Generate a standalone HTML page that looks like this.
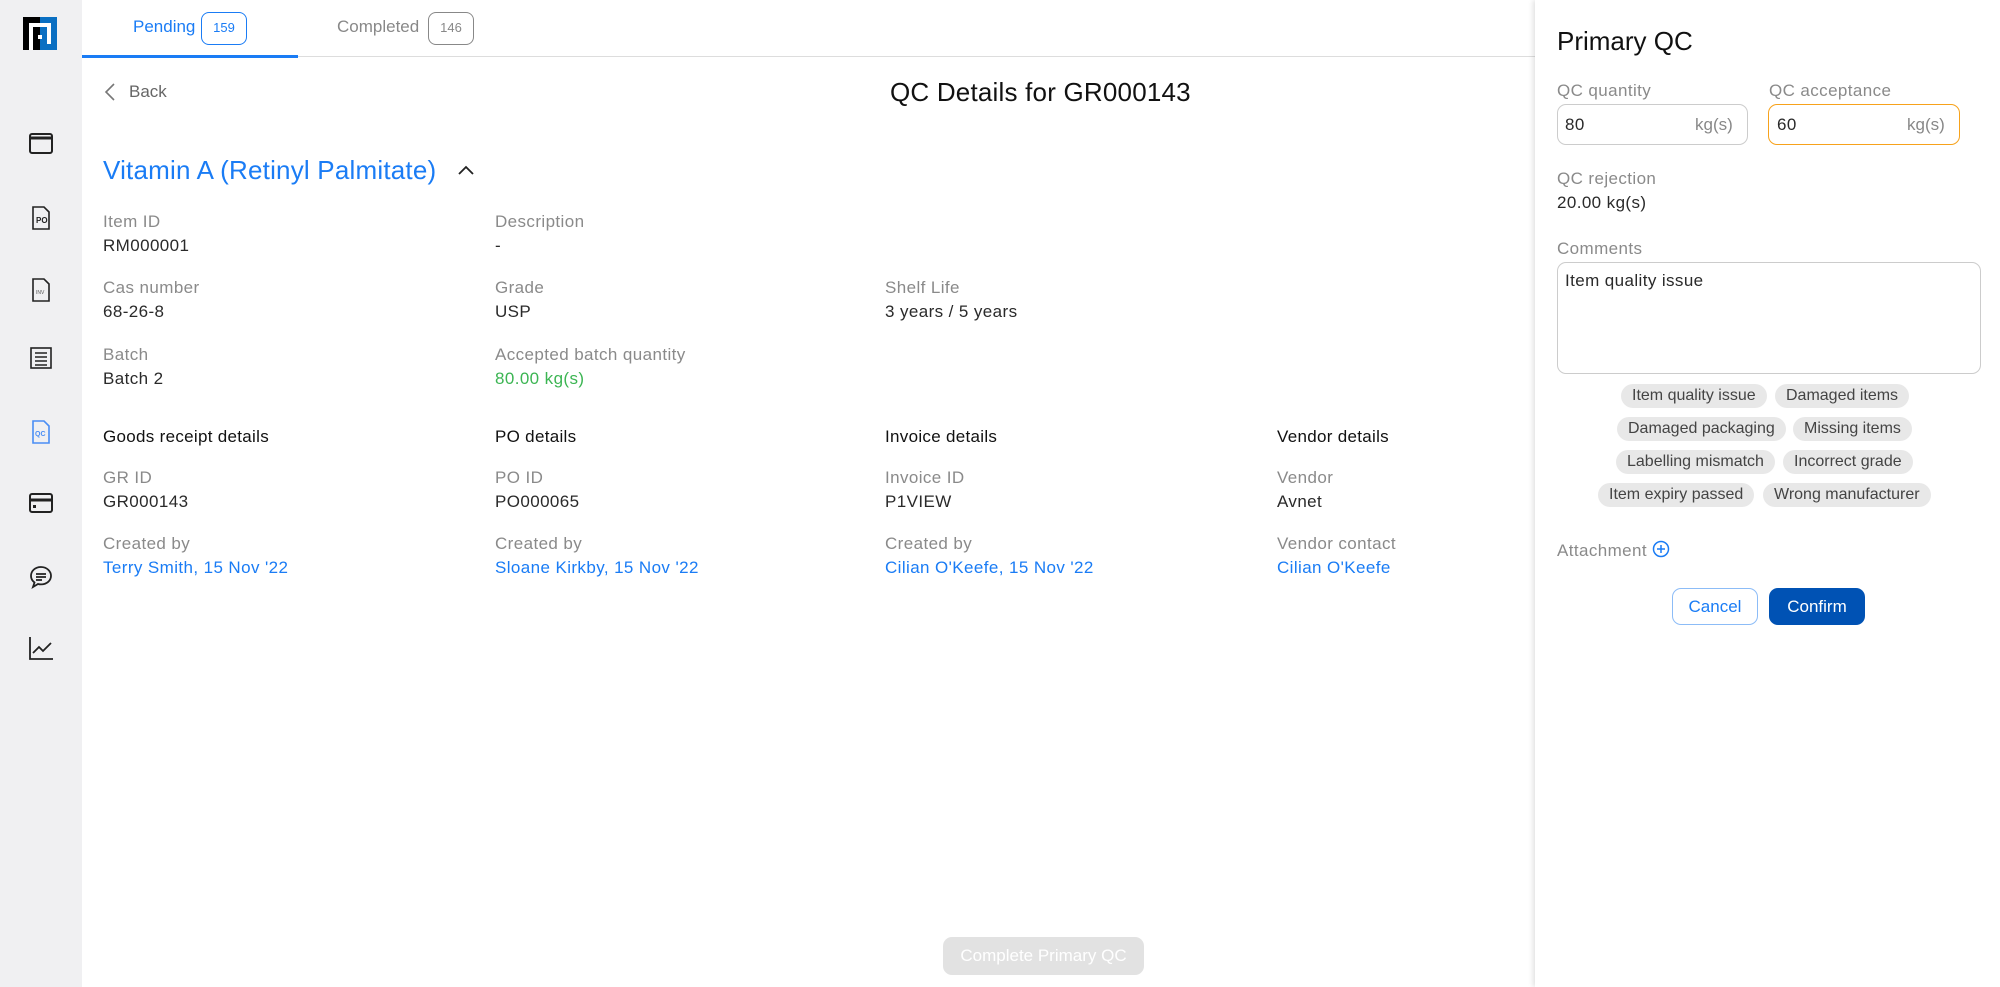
<!DOCTYPE html>
<html><head><meta charset="utf-8">
<style>
*{box-sizing:border-box;margin:0;padding:0}
body{width:2000px;height:987px;overflow:hidden;background:#fff;font-family:"Liberation Sans",sans-serif;position:relative;color:#222}
.abs{position:absolute;white-space:nowrap}
.side{position:absolute;left:0;top:0;width:82px;height:987px;background:#f0f0f2}
.lbl{color:#8a8a8a;font-size:17px;letter-spacing:0.4px}
.val{color:#2a2a2a;font-size:17px;letter-spacing:0.4px}
.blue{color:#1a7cf5}
.hdr{color:#111;font-size:17px;letter-spacing:0.3px}
.chip{position:absolute;height:24px;line-height:24px;background:#e8e8e8;border-radius:12px;font-size:16px;color:#444;padding:0 11px;white-space:nowrap}
.ic{position:absolute;left:28px}
</style></head><body>
<div class="side"></div>
<!-- logo -->
<div class="abs" style="left:23px;top:17px;width:34px;height:33px;background:#000"></div>
<div class="abs" style="left:40px;top:17px;width:17px;height:33px;background:#0a6fc2"></div>
<div class="abs" style="left:29px;top:23px;width:22px;height:4px;background:#fff"></div>
<div class="abs" style="left:29px;top:23px;width:4px;height:27px;background:#fff"></div>
<div class="abs" style="left:47px;top:23px;width:4px;height:21px;background:#fff"></div>
<div class="abs" style="left:38px;top:35px;width:4px;height:4px;background:#fff"></div>
<!-- sidebar icons -->
<svg class="ic" style="top:130px" width="26" height="26" viewBox="0 0 26 26" fill="none" stroke="#222" stroke-width="2"><rect x="2" y="4" width="22" height="19" rx="2"/><line x1="2" y1="8" x2="24" y2="8" stroke-width="3"/></svg>
<svg class="ic" style="top:205px" width="26" height="26" viewBox="0 0 26 26" fill="none" stroke="#222" stroke-width="1.6"><path d="M5 2h11l5 5v17H5z"/><text x="8" y="18" font-size="8" font-family="Liberation Sans" fill="#222" stroke="none" font-weight="bold">PO</text></svg>
<svg class="ic" style="top:277px" width="26" height="26" viewBox="0 0 26 26" fill="none" stroke="#222" stroke-width="1.6"><path d="M5 2h11l5 5v17H5z"/><text x="8" y="17" font-size="5" font-family="Liberation Sans" fill="#555" stroke="none">INV</text></svg>
<svg class="ic" style="top:345px" width="26" height="26" viewBox="0 0 26 26" fill="none" stroke="#222" stroke-width="1.6"><rect x="3" y="3" width="20" height="20"/><path d="M7 8h12M7 12h12M7 16h12M7 20h12"/></svg>
<svg class="ic" style="top:419px" width="26" height="26" viewBox="0 0 26 26" fill="none" stroke="#4a8ef5" stroke-width="1.6"><path d="M5 2h11l5 5v17H5z"/><text x="7" y="17" font-size="7" font-family="Liberation Sans" fill="#4a8ef5" stroke="none" font-weight="bold">QC</text></svg>
<svg class="ic" style="top:490px" width="26" height="26" viewBox="0 0 26 26" fill="none" stroke="#222" stroke-width="2"><rect x="2" y="4" width="22" height="18" rx="2"/><line x1="2" y1="10" x2="24" y2="10" stroke-width="3"/><rect x="5" y="15" width="3" height="3" fill="#222" stroke="none"/></svg>
<svg class="ic" style="top:564px" width="26" height="26" viewBox="0 0 26 26" fill="none" stroke="#222" stroke-width="1.8"><path d="M13 3C7 3 3 7 3 12c0 3 1.5 5 3.5 6.5L5 23l5-3c1 .3 2 .4 3 .4 6 0 10-4 10-8.5S19 3 13 3z"/><path d="M8 10h10M8 13h10M8 16h6"/></svg>
<svg class="ic" style="top:635px" width="26" height="26" viewBox="0 0 26 26" fill="none" stroke="#222" stroke-width="1.8"><path d="M2 2v22h23"/><path d="M5 18l6-6 4 4 8-8"/></svg>

<!-- tabs -->
<div class="abs" style="left:82px;top:56px;width:1453px;height:1px;background:#ddd"></div>
<div class="abs" style="left:82px;top:55px;width:216px;height:3px;background:#1a7cf5"></div>
<div class="abs blue" style="left:133px;top:17px;font-size:17px">Pending</div>
<div class="abs blue" style="left:201px;top:12px;width:46px;height:33px;border:1.5px solid #1a7cf5;border-radius:8px;font-size:13px;text-align:center;line-height:30px">159</div>
<div class="abs" style="left:337px;top:17px;font-size:17px;color:#888">Completed</div>
<div class="abs" style="left:428px;top:12px;width:46px;height:33px;border:1.5px solid #888;border-radius:8px;font-size:13px;text-align:center;line-height:30px;color:#888">146</div>

<!-- back/title -->
<svg class="abs" style="left:104px;top:82px" width="12" height="20" viewBox="0 0 12 20" fill="none" stroke="#777" stroke-width="1.6"><path d="M10 2L2 10l8 8"/></svg>
<div class="abs" style="left:129px;top:82px;font-size:17px;color:#666">Back</div>
<div class="abs" style="left:890px;top:77px;font-size:26px;color:#111;letter-spacing:0.2px">QC Details for GR000143</div>

<div class="abs blue" style="left:103px;top:155px;font-size:26px;letter-spacing:0.2px">Vitamin A (Retinyl Palmitate)</div>
<svg class="abs" style="left:457px;top:164px" width="18" height="12" viewBox="0 0 18 12" fill="none" stroke="#222" stroke-width="1.8"><path d="M2 10l7-7 7 7"/></svg>

<div class="abs lbl" style="left:103px;top:212px">Item ID</div><div class="abs val" style="left:103px;top:236px">RM000001</div>
<div class="abs lbl" style="left:495px;top:212px">Description</div><div class="abs val" style="left:495px;top:236px">-</div>
<div class="abs lbl" style="left:103px;top:278px">Cas number</div><div class="abs val" style="left:103px;top:302px">68-26-8</div>
<div class="abs lbl" style="left:495px;top:278px">Grade</div><div class="abs val" style="left:495px;top:302px">USP</div>
<div class="abs lbl" style="left:885px;top:278px">Shelf Life</div><div class="abs val" style="left:885px;top:302px">3 years / 5 years</div>
<div class="abs lbl" style="left:103px;top:345px">Batch</div><div class="abs val" style="left:103px;top:369px">Batch 2</div>
<div class="abs lbl" style="left:495px;top:345px">Accepted batch quantity</div><div class="abs val" style="left:495px;top:369px;color:#3cb553">80.00 kg(s)</div>

<div class="abs hdr" style="left:103px;top:427px">Goods receipt details</div>
<div class="abs hdr" style="left:495px;top:427px">PO details</div>
<div class="abs hdr" style="left:885px;top:427px">Invoice details</div>
<div class="abs hdr" style="left:1277px;top:427px">Vendor details</div>

<div class="abs lbl" style="left:103px;top:468px">GR ID</div><div class="abs val" style="left:103px;top:492px">GR000143</div>
<div class="abs lbl" style="left:495px;top:468px">PO ID</div><div class="abs val" style="left:495px;top:492px">PO000065</div>
<div class="abs lbl" style="left:885px;top:468px">Invoice ID</div><div class="abs val" style="left:885px;top:492px">P1VIEW</div>
<div class="abs lbl" style="left:1277px;top:468px">Vendor</div><div class="abs val" style="left:1277px;top:492px">Avnet</div>

<div class="abs lbl" style="left:103px;top:534px">Created by</div><div class="abs val blue" style="left:103px;top:558px">Terry Smith, 15 Nov '22</div>
<div class="abs lbl" style="left:495px;top:534px">Created by</div><div class="abs val blue" style="left:495px;top:558px">Sloane Kirkby, 15 Nov '22</div>
<div class="abs lbl" style="left:885px;top:534px">Created by</div><div class="abs val blue" style="left:885px;top:558px">Cilian O'Keefe, 15 Nov '22</div>
<div class="abs lbl" style="left:1277px;top:534px">Vendor contact</div><div class="abs val blue" style="left:1277px;top:558px">Cilian O'Keefe</div>

<div class="abs" style="left:943px;top:937px;width:201px;height:38px;background:#e2e2e2;border-radius:9px;color:#fff;font-size:17px;text-align:center;line-height:38px">Complete Primary QC</div>

<!-- right panel -->
<div class="abs" style="left:1535px;top:0;width:465px;height:987px;background:#fff;box-shadow:-2px 0 5px rgba(0,0,0,0.12)"></div>
<div class="abs" style="left:1557px;top:26px;font-size:26px;color:#111">Primary QC</div>
<div class="abs lbl" style="left:1557px;top:81px">QC quantity</div>
<div class="abs lbl" style="left:1769px;top:81px">QC acceptance</div>
<div class="abs" style="left:1557px;top:104px;width:191px;height:41px;border:1px solid #ccc;border-radius:9px"></div>
<div class="abs val" style="left:1565px;top:115px">80</div><div class="abs" style="left:1695px;top:115px;font-size:17px;color:#888">kg(s)</div>
<div class="abs" style="left:1768px;top:104px;width:192px;height:41px;border:1.5px solid #f7a21b;border-radius:9px"></div>
<div class="abs val" style="left:1777px;top:115px">60</div><div class="abs" style="left:1907px;top:115px;font-size:17px;color:#888">kg(s)</div>
<div class="abs lbl" style="left:1557px;top:169px">QC rejection</div>
<div class="abs val" style="left:1557px;top:193px">20.00 kg(s)</div>
<div class="abs lbl" style="left:1557px;top:239px">Comments</div>
<div class="abs" style="left:1557px;top:262px;width:424px;height:112px;border:1px solid #ccc;border-radius:9px"></div>
<div class="abs val" style="left:1565px;top:271px">Item quality issue</div>

<div class="chip" style="left:1621px;top:384px">Item quality issue</div>
<div class="chip" style="left:1775px;top:384px">Damaged items</div>
<div class="chip" style="left:1617px;top:417px">Damaged packaging</div>
<div class="chip" style="left:1793px;top:417px">Missing items</div>
<div class="chip" style="left:1616px;top:450px">Labelling mismatch</div>
<div class="chip" style="left:1783px;top:450px">Incorrect grade</div>
<div class="chip" style="left:1598px;top:483px">Item expiry passed</div>
<div class="chip" style="left:1763px;top:483px">Wrong manufacturer</div>

<div class="abs lbl" style="left:1557px;top:541px">Attachment</div>
<svg class="abs" style="left:1652px;top:540px" width="18" height="18" viewBox="0 0 18 18" fill="none" stroke="#1a7cf5" stroke-width="1.5"><circle cx="9" cy="9" r="7.5"/><path d="M9 5v8M5 9h8"/></svg>

<div class="abs blue" style="left:1672px;top:588px;width:86px;height:37px;border:1px solid #8cbcf7;border-radius:9px;font-size:17px;text-align:center;line-height:35px">Cancel</div>
<div class="abs" style="left:1769px;top:588px;width:96px;height:37px;background:#0052b4;border-radius:9px;font-size:17px;text-align:center;line-height:37px;color:#fff">Confirm</div>
</body></html>
